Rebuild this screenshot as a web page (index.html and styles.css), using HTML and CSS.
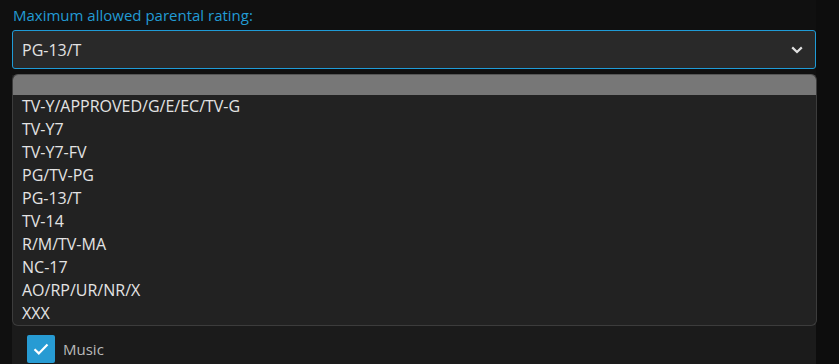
FILE: index.html
```html
<!DOCTYPE html>
<html>
<head>
<meta charset="utf-8">
<link rel="stylesheet" href="styles.css">
</head>
<body>
<div class="page">
  <div class="field">
    <label class="label">Maximum allowed parental rating:</label>
    <div class="select">
      <span class="value">PG-13/T</span>
      <svg class="chev" width="12" height="8" viewBox="0 0 12 8"><path d="M1.2 1.4 L6 6 L10.8 1.4" fill="none" stroke="#e0e0e0" stroke-width="2.2"/></svg>
    </div>
  </div>
  <div class="panel">
    <div class="check-row">
      <span class="checkbox"><svg width="18" height="14" viewBox="0 0 18 14"><path d="M2.5 7.2 L6.8 11.4 L15.5 2.6" fill="none" stroke="#fff" stroke-width="2.2"/></svg></span>
      <span class="check-label">Music</span>
    </div>
    <ul class="menu">
      <li class="menu-head"></li>
      <li>TV-Y/APPROVED/G/E/EC/TV-G</li>
      <li>TV-Y7</li>
      <li>TV-Y7-FV</li>
      <li>PG/TV-PG</li>
      <li>PG-13/T</li>
      <li>TV-14</li>
      <li>R/M/TV-MA</li>
      <li>NC-17</li>
      <li>AO/RP/UR/NR/X</li>
      <li>XXX</li>
    </ul>
  </div>
</div>
</body>
</html>
```

FILE: styles.css
```css
html, body {
  margin: 0;
  padding: 0;
  background: #0d0d0d;
  font-family: "Open Sans", "Noto Sans", sans-serif;
  height: 364px;
  overflow: hidden;
}
.page {
  width: 816px;
  height: 364px;
  background: #101010;
  display: flex;
  flex-direction: column;
}
.field {
  padding: 5px 0 0 12px;
  display: flex;
  flex-direction: column;
}
.label {
  color: #229bd4;
  font-size: 15px;
  line-height: 20px;
  margin: 0 0 5px 1px;
}
.select {
  box-sizing: border-box;
  height: 39px;
  width: 804px;
  border: 1px solid #1f9bd6;
  border-radius: 3px;
  background: #292929;
  display: flex;
  align-items: center;
  justify-content: space-between;
  padding: 0 12px 0 9px;
}
.value {
  color: #e2e2e2;
  font-size: 16px;
  font-weight: 500;
}
.chev { display: block; margin-top: 1px; }
.panel {
  position: relative;
  margin: 6px 0 0 12px;
  flex: 1;
  background: #1b1b1b;
}
.check-row {
  position: absolute;
  left: 15px;
  bottom: 1px;
  display: flex;
  align-items: center;
  gap: 8px;
}
.checkbox {
  width: 28px;
  height: 28px;
  background: #279bd3;
  border-radius: 2px;
  display: flex;
  align-items: center;
  justify-content: center;
}
.checkbox svg { display: block; }
.check-label {
  color: #b9b9b9;
  font-size: 15px;
  font-weight: 500;
}
.menu {
  position: absolute;
  top: -1px;
  left: 0;
  width: 803px;
  margin: 0;
  padding: 0;
  list-style: none;
  background: #222222;
  border: 1px solid #3c3c3c;
  border-top-color: #555;
  border-radius: 6px;
  overflow: hidden;
}
.menu li {
  height: 23px;
  line-height: 23px;
  padding-left: 9px;
  color: #e4e4e4;
  font-size: 16px;
  font-weight: 500;
}
.menu .menu-head {
  height: 20px;
  background: #777777;
}
```
